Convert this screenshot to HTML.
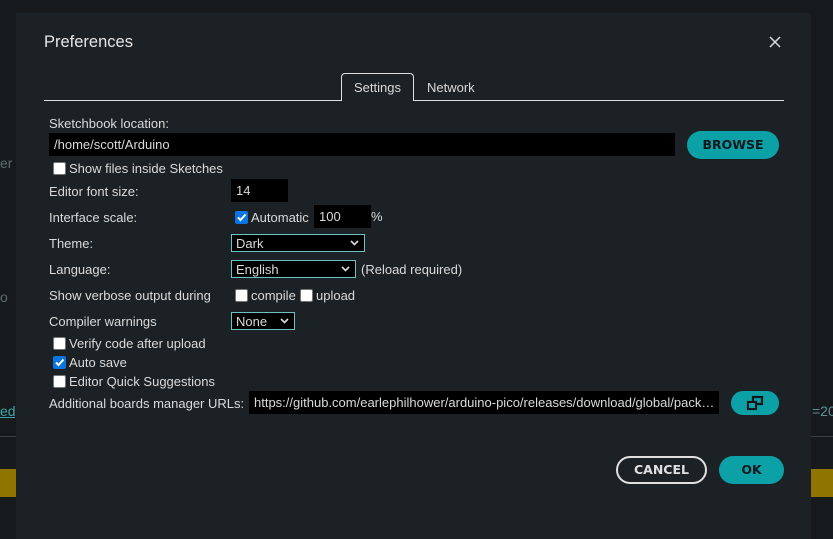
<!DOCTYPE html>
<html><head><style>
*{box-sizing:border-box;margin:0;padding:0}
body{width:833px;height:539px;background:#161a1d;font-family:"Liberation Sans",sans-serif;color:#dadada;font-size:13px;position:relative;overflow:hidden}
.a{position:absolute}
.dlg{left:16px;top:13px;width:795px;height:526px;background:#1c2125}
.inp{background:#000;color:#dadada;font-size:13px;padding-left:5px;line-height:23px;height:23px}
.sel{border:1px solid #6fc1c4;background:#000;color:#dadada;font-size:13px;padding-left:4px;line-height:17px;height:18px}
.sel svg{position:absolute;right:5px;top:5px}
.cb{width:13px;height:13px;background:#fff;border-radius:2px;border:1px solid #767676}
.cbk{background:#0a75e0;border-color:#0a75e0}
.btn{background:#0ca1a6;color:#11181c;font-weight:bold;font-family:"DejaVu Sans",sans-serif;font-size:12.5px;border-radius:14px;text-align:center}
</style></head><body>
<div class="a" style="left:0;top:155px;color:#5d6c70;font-size:14px">er</div>
<div class="a" style="left:0;top:289px;color:#5d6c70;font-size:14px">o</div>
<div class="a" style="left:0;top:403px;color:#3fa3a8;font-size:14px;text-decoration:underline">edg</div>
<div class="a" style="left:812px;top:403px;color:#5d8f94;font-size:14px">=20</div>
<div class="a" style="left:0;top:436px;width:833px;height:1px;background:#3a4247"></div>
<div class="a" style="left:0;top:469px;width:833px;height:28px;background:#8f7500"></div>
<div class="a dlg">
<div class="a" style="left:28px;top:20px;font-size:16.5px;color:#e6e6e6">Preferences</div>
<svg class="a" style="left:753px;top:23px" width="12" height="12"><path d="M1 1L11 11M11 1L1 11" stroke="#ddd" stroke-width="1.5"/></svg>
<div class="a" style="left:28px;top:87px;width:740px;height:1px;background:#e0e0e0"></div>
<div class="a" style="left:325px;top:60px;width:73px;height:28px;border:1px solid #e0e0e0;border-bottom:none;border-radius:4px 4px 0 0;background:#1c2125;text-align:center;line-height:27px">Settings</div>
<div class="a" style="left:411px;top:67px">Network</div>
<div class="a" style="left:33px;top:103px">Sketchbook location:</div>
<div class="a inp" style="left:33px;top:120px;width:626px">/home/scott/Arduino</div>
<div class="a btn" style="left:671px;top:118px;width:92px;height:28px;line-height:28px">BROWSE</div>
<div class="a cb" style="left:37px;top:149px"></div><div class="a" style="left:53px;top:148px">Show files inside Sketches</div>
<div class="a" style="left:33px;top:171px">Editor font size:</div>
<div class="a inp" style="left:215px;top:166px;width:57px">14</div>
<div class="a" style="left:33px;top:197px">Interface scale:</div>
<div class="a cb cbk" style="left:219px;top:198px"><svg width="11" height="11" style="position:absolute;left:0;top:0"><path d="M2 5.5L4.5 8L9.5 2.5" stroke="#fff" stroke-width="2" fill="none"/></svg></div>
<div class="a" style="left:235px;top:197px">Automatic</div>
<div class="a inp" style="left:298px;top:192px;width:57px">100</div>
<div class="a" style="left:355px;top:196px">%</div>
<div class="a" style="left:33px;top:223px">Theme:</div>
<div class="a sel" style="left:215px;top:221px;width:134px">Dark<svg width="9" height="6"><path d="M1 1L4.5 4.5L8 1" stroke="#ddd" stroke-width="1.6" fill="none"/></svg></div>
<div class="a" style="left:33px;top:249px">Language:</div>
<div class="a sel" style="left:215px;top:247px;width:125px">English<svg width="9" height="6"><path d="M1 1L4.5 4.5L8 1" stroke="#ddd" stroke-width="1.6" fill="none"/></svg></div>
<div class="a" style="left:345px;top:249px">(Reload required)</div>
<div class="a" style="left:33px;top:275px">Show verbose output during</div>
<div class="a cb" style="left:219px;top:276px"></div><div class="a" style="left:235px;top:275px">compile</div>
<div class="a cb" style="left:284px;top:276px"></div><div class="a" style="left:300px;top:275px">upload</div>
<div class="a" style="left:33px;top:301px">Compiler warnings</div>
<div class="a sel" style="left:215px;top:299px;width:64px">None<svg width="9" height="6"><path d="M1 1L4.5 4.5L8 1" stroke="#ddd" stroke-width="1.6" fill="none"/></svg></div>
<div class="a cb" style="left:37px;top:324px"></div><div class="a" style="left:53px;top:323px">Verify code after upload</div>
<div class="a cb cbk" style="left:37px;top:343px"><svg width="11" height="11" style="position:absolute;left:0;top:0"><path d="M2 5.5L4.5 8L9.5 2.5" stroke="#fff" stroke-width="2" fill="none"/></svg></div><div class="a" style="left:53px;top:342px">Auto save</div>
<div class="a cb" style="left:37px;top:362px"></div><div class="a" style="left:53px;top:361px">Editor Quick Suggestions</div>
<div class="a" style="left:33px;top:383px">Additional boards manager URLs:</div>
<div class="a inp" style="left:233px;top:378px;width:470px;white-space:nowrap;overflow:hidden;text-overflow:ellipsis">https://github.com/earlephilhower/arduino-pico/releases/download/global/package_rp2040_index.json</div>
<div class="a btn" style="left:715px;top:378px;width:48px;height:24px"><svg width="18" height="16" style="margin-top:4px"><rect x="7" y="2" width="9" height="7" fill="none" stroke="#11181c" stroke-width="2.2"/><rect x="2" y="7" width="8" height="7" fill="none" stroke="#11181c" stroke-width="2.2"/><rect x="3" y="8" width="6" height="5" fill="#0ca1a6"/></svg></div>
<div class="a" style="left:600px;top:443px;width:91px;height:28px;border:2px solid #e0e0e0;border-radius:14px;text-align:center;line-height:24px;font-weight:bold;font-family:'DejaVu Sans',sans-serif;font-size:12.5px;color:#e0e0e0">CANCEL</div>
<div class="a btn" style="left:703px;top:443px;width:65px;height:28px;line-height:28px">OK</div>
</div>
</body></html>
